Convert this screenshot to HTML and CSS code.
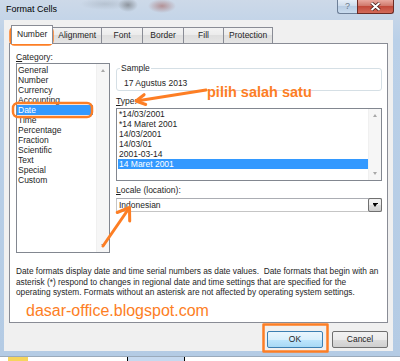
FILE: index.html
```html
<!DOCTYPE html>
<html>
<head>
    <title>Format Cells</title>
    <link rel="stylesheet" href="styles.css">
</head>
<body>
    <div id="window">
        <!-- Title bar -->
        <div class="titlebar">
            <span class="title">Format Cells</span>
            <div class="controls">
                <span class="btn-help">?</span>
                <span class="btn-close">
                    <svg width="11" height="9" viewBox="0 0 11 9"><path d="M1.5 1 L9.5 8 M9.5 1 L1.5 8" stroke="#3b1410" stroke-width="3.4"/><path d="M1.5 1 L9.5 8 M9.5 1 L1.5 8" stroke="#ffffff" stroke-width="2"/></svg>
                </span>
            </div>
        </div>

        <div class="client">
            <!-- Tabs -->
            <div class="tabs">
                <div class="tab active">Number</div>
                <div class="tab">Alignment</div>
                <div class="tab">Font</div>
                <div class="tab">Border</div>
                <div class="tab tab-fill">Fill</div>
                <div class="tab">Protection</div>
            </div>

            <div class="panel">
                <div class="columns">
                    <div class="left">
                        <div class="label"><u>C</u>ategory:</div>
                        <div class="listbox category">
                            <ul>
                                <li>General</li>
                                <li>Number</li>
                                <li>Currency</li>
                                <li>Accounting</li>
                                <li class="selected">Date</li>
                                <li>Time</li>
                                <li>Percentage</li>
                                <li>Fraction</li>
                                <li>Scientific</li>
                                <li>Text</li>
                                <li>Special</li>
                                <li>Custom</li>
                            </ul>
                            <div class="scrollbar"><span class="arrow up"></span><span class="arrow down"></span></div>
                        </div>
                    </div>

                    <div class="right">
                        <fieldset class="sample">
                            <legend>Sample</legend>
                            <div class="sample-value">17 Agustus 2013</div>
                        </fieldset>
                        <div class="label type-label"><u>T</u>ype:</div>
                        <div class="listbox types">
                            <ul>
                                <li>*14/03/2001</li>
                                <li>*14 Maret 2001</li>
                                <li>14/03/2001</li>
                                <li>14/03/01</li>
                                <li>2001-03-14</li>
                                <li class="selected">14 Maret 2001</li>
                            </ul>
                            <div class="scrollbar"><span class="arrow up"></span><span class="arrow down"></span></div>
                        </div>
                        <div class="label locale-label"><u>L</u>ocale (location):</div>
                        <div class="select">
                            <span class="select-text">Indonesian</span>
                            <span class="drop"></span>
                        </div>
                    </div>
                </div>

                <p class="desc">Date formats display date and time serial numbers as date values.&nbsp; Date formats that begin with an<br>asterisk (*) respond to changes in regional date and time settings that are specified for the<br>operating system. Formats without an asterisk are not affected by operating system settings.</p>

                <div class="watermark">dasar-office.blogspot.com</div>
            </div>

            <div class="buttons">
                <div class="btn ok">OK</div>
                <div class="btn">Cancel</div>
            </div>
        </div>
    </div>

    <!-- sheet behind the dialog -->
    <div class="sheet">
        <span class="cell-yellow"></span>
        <span class="cell-range"></span>
    </div>

    <!-- annotations -->
    <svg class="annot" width="400" height="361">
        <rect x="10.5" y="27.5" width="42" height="17" rx="4" />
        <rect x="13" y="103" width="79" height="14" rx="5" />
        <rect x="263.5" y="324.5" width="64" height="27" rx="0" />
        <path d="M206 90 L138 100.7" />
        <path d="M145.7 104.5 L136 101 L144.1 94.7" />
        <path d="M103 246 L128.5 209" />
        <path d="M129.7 220.9 L129.5 207.5 L117.2 212.5" />
    </svg>
    <div class="note">pilih salah satu</div>
</body>
</html>
```

FILE: styles.css
```css
/* Format Cells dialog, Windows 7 look */
:root {
    --orange: #fd7e24;
    --client: #f0f0f0;
    --tab-border: #898c95;
    --list-border: #828790;
    --select-blue: #3399ff;
    --text: #1e1e1e;
}

* {
    box-sizing: border-box;
}

body {
    margin: 0;
    width: 400px;
    height: 361px;
    overflow: hidden;
    position: relative;
    font-family: "Liberation Sans", Arial, sans-serif;
    font-size: 8.5px;
    color: var(--text);
    background: #ffffff;
}

#window {
    width: 400px;
    height: 356px;
    display: flex;
    flex-direction: column;
    padding: 0 7px 5px 4px;
    background:
        radial-gradient(ellipse 10px 7px at 128px 5px, rgba(70, 70, 70, 0.45), transparent),
        radial-gradient(ellipse 14px 7px at 162px 6px, rgba(150, 60, 50, 0.45), transparent),
        radial-gradient(ellipse 25px 6px at 105px 4px, rgba(120, 130, 140, 0.25), transparent),
        linear-gradient(#cdd9e8, #bad0e8 40px, #b4cbe4);
}

/* title bar */
.titlebar {
    height: 20px;
    display: flex;
    justify-content: space-between;
    align-items: flex-start;
}

.title {
    padding: 4px 0 0 2px;
    line-height: 10px;
    font-size: 9px;
    color: #000000;
}

.controls {
    display: flex;
    margin-right: -1px;
}

.btn-help {
    width: 20px;
    height: 14px;
    border: 1px solid #6d7f97;
    border-top: none;
    border-right: none;
    border-radius: 0 0 0 3px;
    background: linear-gradient(#e6eef7, #cbdaeb 50%, #b9cde3 50%, #c9dbee);
    color: #6b7a8c;
    font-size: 9px;
    line-height: 13px;
    text-align: center;
}

.btn-close {
    width: 37px;
    height: 14px;
    border: 1px solid #6b2b25;
    border-top: none;
    border-radius: 0 0 3px 0;
    background: linear-gradient(#e9a99f, #d0786b 45%, #c24a3a 50%, #d36b5b);
    display: flex;
    justify-content: center;
    align-items: center;
}

/* client area */
.client {
    flex: 1;
    min-width: 0;
    background: var(--client);
    padding: 5px 5px 0 5px;
    display: flex;
    flex-direction: column;
}

.tabs {
    display: flex;
    align-items: flex-end;
    height: 18px;
    padding-left: 2px;
}

.tab {
    min-width: 42px;
    height: 16px;
    padding: 0 5px;
    margin-right: -1px;
    line-height: 14px;
    text-align: center;
    border: 1px solid var(--tab-border);
    border-bottom: none;
    background: linear-gradient(#f3f3f3, #ebebeb 50%, #dedede 50%, #e5e5e5);
}

.tab-fill {
    min-width: 41px;
}

.tab.active {
    position: relative;
    z-index: 1;
    height: 19px;
    margin-bottom: -1px;
    line-height: 17px;
    background: #ffffff;
}

.panel {
    height: 280px;
    flex: none;
    overflow: hidden;
    background: #ffffff;
    border: 1px solid var(--tab-border);
    padding: 8px 5px 0 6px;
}

.columns {
    display: flex;
    gap: 6px;
}

.left {
    width: 94px;
}

.right {
    width: 266px;
}

.label {
    height: 11px;
    line-height: 10px;
}

.label u {
    text-decoration-thickness: 1px;
    text-underline-offset: 1px;
}

/* list boxes */
.listbox {
    display: flex;
    border: 1px solid var(--list-border);
    background: #ffffff;
}

.listbox ul {
    flex: 1;
    list-style: none;
    margin: 0;
    padding: 1px 3px 0 0;
}

.listbox li {
    height: 10px;
    line-height: 10px;
    padding-left: 1px;
    white-space: nowrap;
}

.listbox li.selected {
    background: var(--select-blue);
    color: #ffffff;
}

.category {
    height: 190px;
}

.types {
    height: 73px;
    margin-top: 1px;
}

.types ul {
    padding: 0 0 0 1px;
}

.scrollbar {
    width: 13px;
    background: #f6f6f6;
    border-left: 1px solid #f0f0f0;
    display: flex;
    flex-direction: column;
    justify-content: space-between;
    align-items: center;
    padding: 5px 0;
}

.arrow {
    width: 0;
    height: 0;
    border-left: 2.5px solid transparent;
    border-right: 2.5px solid transparent;
}

.arrow.up {
    border-bottom: 3px solid #a8a8a8;
}

.arrow.down {
    border-top: 3px solid #a8a8a8;
}

/* sample group */
.sample {
    margin: 11px 0 0 0;
    height: 28px;
    padding: 0 0 0 3px;
    border: 1px solid #d5dfe5;
    border-radius: 3px;
}

.sample legend {
    padding: 0 1px;
    line-height: 10px;
}

.sample-value {
    margin-top: 5px;
    padding-left: 4px;
    line-height: 10px;
}

.type-label {
    margin-top: 5px;
}

.locale-label {
    margin-top: 4px;
}

.select {
    margin-top: 2px;
    height: 14px;
    display: flex;
    justify-content: space-between;
    border: 1px solid #c5c5c5;
    border-top-color: #abadb3;
    background: #ffffff;
}

.select-text {
    padding-left: 2px;
    line-height: 12px;
}

.drop {
    width: 14px;
    height: 14px;
    margin: -1px -1px 0 0;
    border: 1px solid #707070;
    border-radius: 2px;
    background: linear-gradient(#f2f2f2, #ebebeb 50%, #dddddd 50%, #cfcfcf);
    position: relative;
}

.drop::after {
    content: "";
    position: absolute;
    left: 4px;
    top: 5px;
    border-left: 2.5px solid transparent;
    border-right: 2.5px solid transparent;
    border-top: 3px solid #000000;
}

.drop::before {
    content: "";
    position: absolute;
    left: 4px;
    top: 4px;
    width: 5px;
    height: 1px;
    background: #000000;
}

/* description */
.desc {
    margin: 13px 0 0 0;
    font-size: 8.3px;
    line-height: 10.5px;
    white-space: nowrap;
}

.watermark {
    margin-top: 4px;
    padding-left: 10px;
    font-size: 16px;
    line-height: 18px;
    color: var(--orange);
}

/* buttons */
.buttons {
    display: flex;
    justify-content: flex-end;
    gap: 9px;
    margin-top: 8px;
}

.btn {
    width: 56px;
    height: 17px;
    line-height: 15px;
    text-align: center;
    color: var(--text);
    border: 1px solid #707070;
    border-radius: 2px;
    background: linear-gradient(#f2f2f2, #ebebeb 50%, #dddddd 50%, #cfcfcf);
}

.btn.ok {
    border-color: #3c7fb1;
    background: linear-gradient(#eaf6fd, #d9f0fc 50%, #bee6fd 50%, #a7d9f5);
}

/* sheet strip behind the dialog */
.sheet {
    height: 5px;
    display: flex;
    background: #ffffff;
    border-top: 1px solid #9aaabb;
}

.cell-yellow {
    width: 20px;
    margin-left: 8px;
    background: #f6d55c;
}

.cell-range {
    width: 58px;
    margin-left: 99px;
    background: #c6d9ef;
    border-left: 1px solid #000000;
    border-right: 1px solid #000000;
}

/* annotations drawn over the screenshot */
.annot {
    position: absolute;
    left: 0;
    top: 0;
    pointer-events: none;
}

.annot rect,
.annot path {
    fill: none;
    stroke: var(--orange);
    stroke-width: 2.5;
    stroke-linecap: round;
    stroke-linejoin: round;
}

.annot path {
    stroke-width: 3;
}

.note {
    position: absolute;
    left: 207px;
    top: 84px;
    font-size: 14.5px;
    line-height: 16px;
    font-weight: bold;
    color: var(--orange);
    white-space: nowrap;
}
```
